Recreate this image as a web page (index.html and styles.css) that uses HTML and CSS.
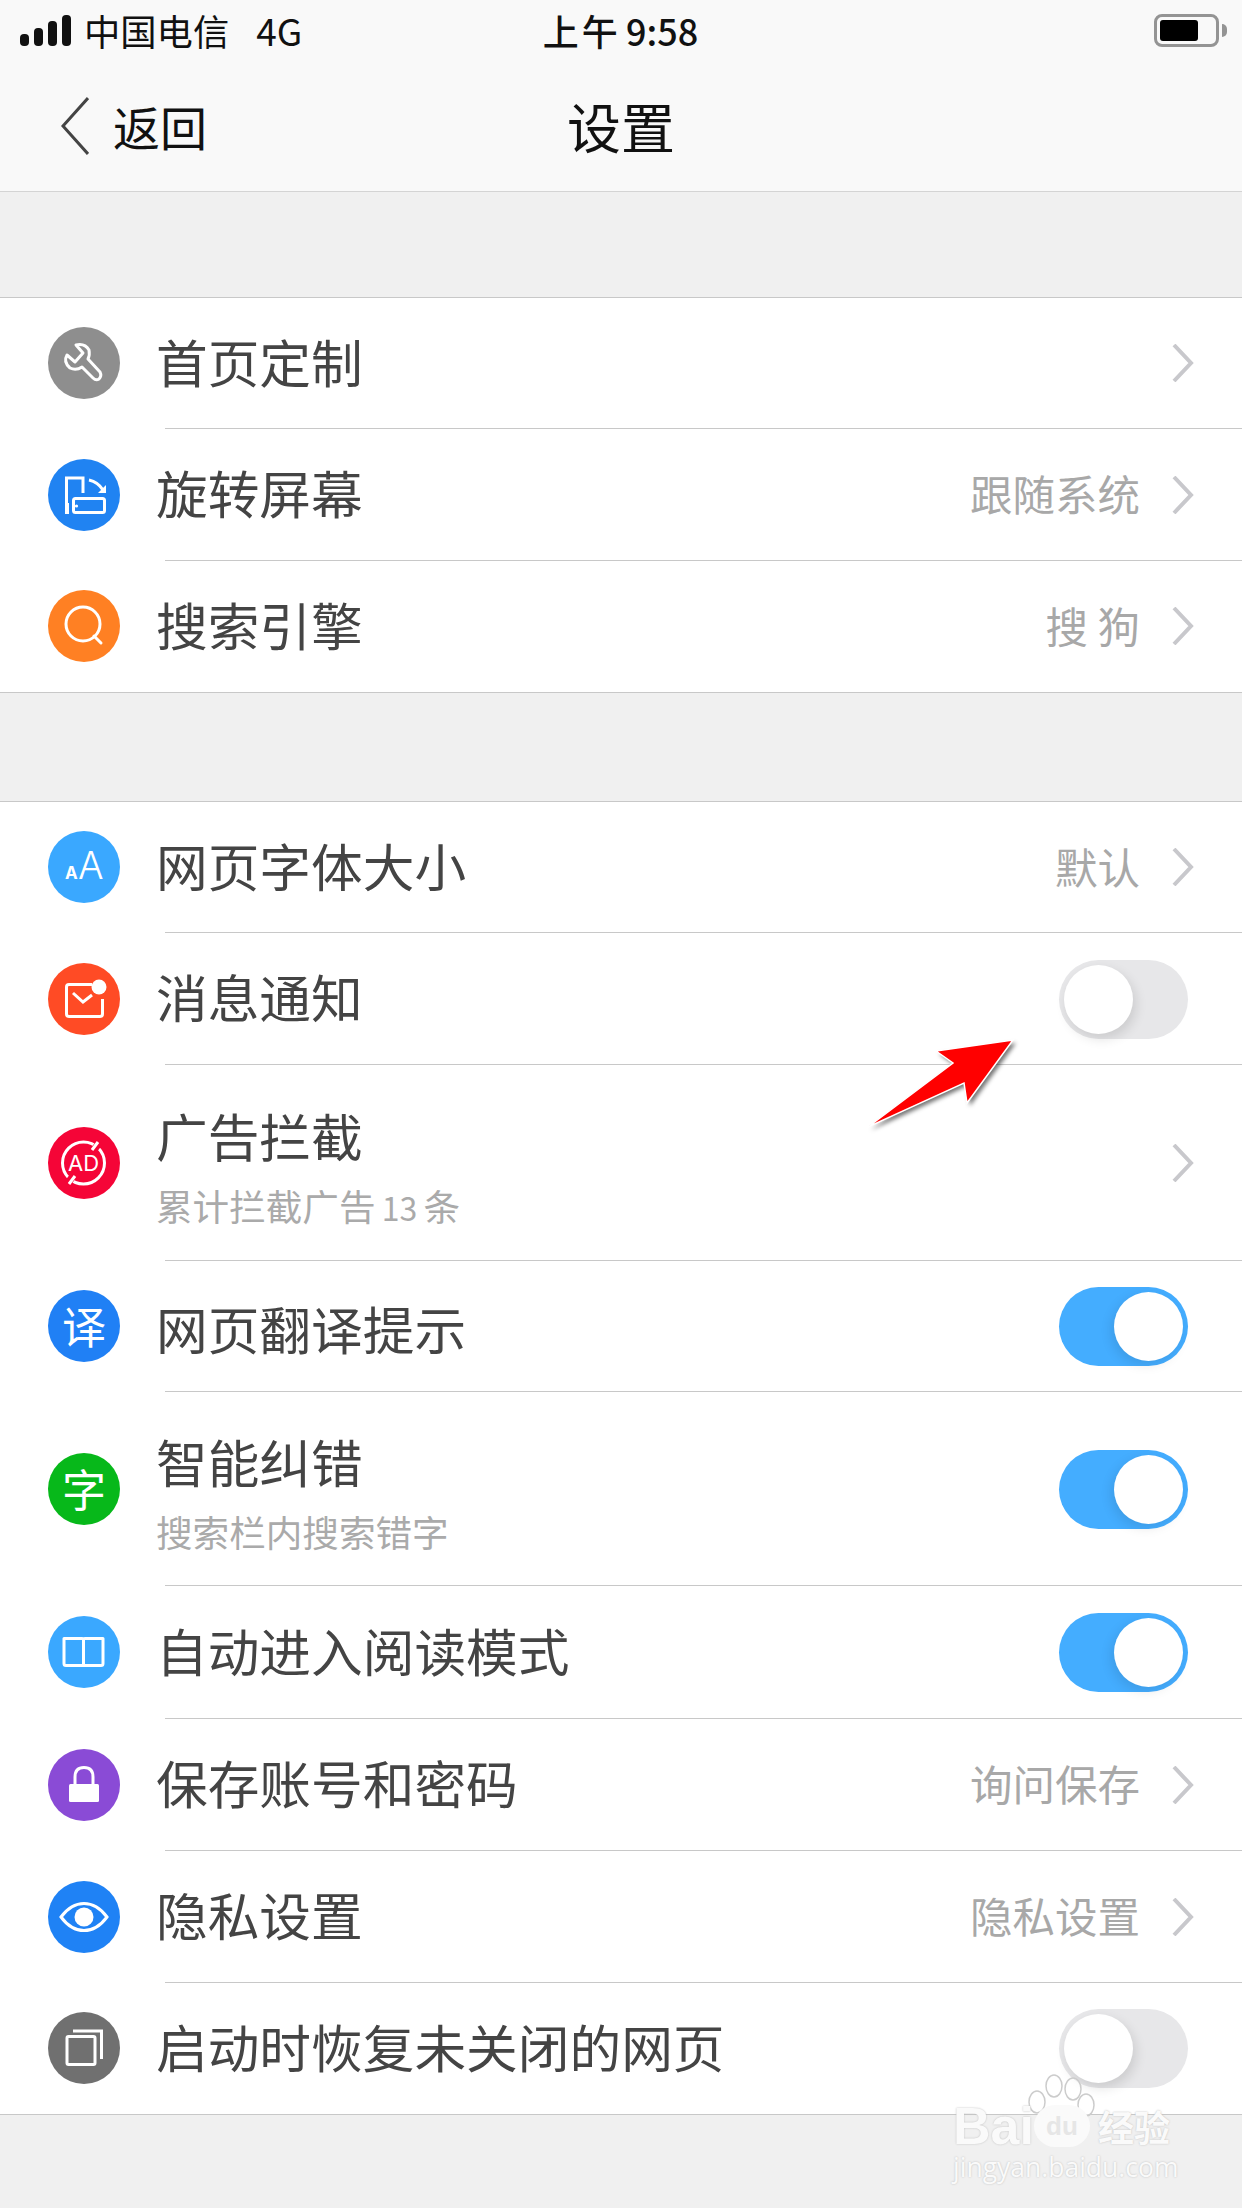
FILE: index.html
```html
<!DOCTYPE html>
<html lang="zh-CN">
<head>
    <meta charset="UTF-8">
    <title>设置</title>
    <link rel="stylesheet" href="styles.css">
</head>
<body>

<!-- Status bar and title -->
<header class="top">
    <div class="status-bar">
        <div class="status-left">
            <div class="signal"><i class="bar1"></i><i class="bar2"></i><i class="bar3"></i><i class="bar4"></i></div>
            <span class="carrier">中国电信</span>
            <span class="network">4G</span>
        </div>
        <span class="clock"><span class="clock-cn">上午</span> 9:58</span>
        <div class="battery"><div class="battery-case"><div class="battery-fill"></div></div><div class="battery-nub"></div></div>
    </div>
    <nav class="nav-bar">
        <div class="back">
            <svg class="back-icon" width="28" height="58" viewBox="0 0 28 58"><path d="M27 1 L2 29 L27 57" fill="none" stroke="#444" stroke-width="3"/></svg>
            <span class="back-label">返回</span>
        </div>
        <span class="nav-title">设置</span>
    </nav>
</header>

<section class="group group-first">
    <div class="row row-short">
        <svg class="icon" viewBox="0 0 72 72"><circle cx="36" cy="36" r="36" fill="#8e8e8e"/><path d="M19 28 L27 35 L35 26 L28 18 Q37 16 41 23 Q42 28 40 32 L52 45 Q54 49 51 52 Q48 54 45 51 L34 40 Q28 44 22 41 Q15 35 19 28 Z" fill="none" stroke="#fff" stroke-width="3" stroke-linejoin="round"/></svg>
        <div class="label">首页定制</div>
        <svg class="chevron" viewBox="0 0 22 38"><path d="M2 1 L19 19 L2 37" fill="none" stroke="#c8c8cc" stroke-width="4"/></svg>
    </div>
    <div class="row">
        <svg class="icon" viewBox="0 0 72 72"><circle cx="36" cy="36" r="36" fill="#2083f2"/><path d="M18.500 55 V19 H35 V34" fill="none" stroke="#fff" stroke-width="3"/><rect x="17" y="44" width="4" height="11" fill="#fff"/><rect x="25.500" y="39.500" width="31" height="14" rx="2" fill="none" stroke="#fff" stroke-width="3"/><circle cx="28.500" cy="47" r="1.600" fill="#fff"/><path d="M41 21 Q50 23 55 31" fill="none" stroke="#fff" stroke-width="3"/><path d="M58 26 V34 H50 Z" fill="#fff"/></svg>
        <div class="label">旋转屏幕</div>
        <div class="value">跟随系统</div>
        <svg class="chevron" viewBox="0 0 22 38"><path d="M2 1 L19 19 L2 37" fill="none" stroke="#c8c8cc" stroke-width="4"/></svg>
    </div>
    <div class="row row-short">
        <svg class="icon" viewBox="0 0 72 72"><circle cx="36" cy="36" r="36" fill="#ff8023"/><circle cx="35" cy="34" r="17" fill="none" stroke="#fff" stroke-width="3"/><path d="M46 46 L53 53" stroke="#fff" stroke-width="3" stroke-linecap="round"/></svg>
        <div class="label">搜索引擎</div>
        <div class="value">搜 狗</div>
        <svg class="chevron" viewBox="0 0 22 38"><path d="M2 1 L19 19 L2 37" fill="none" stroke="#c8c8cc" stroke-width="4"/></svg>
    </div>
</section>

<section class="group">
    <div class="row row-short">
        <svg class="icon" viewBox="0 0 72 72"><circle cx="36" cy="36" r="36" fill="#3aa8ff"/><text class="icon-text" x="17" y="48" font-size="17" font-weight="700" fill="#fff">A</text><text class="icon-text" x="30" y="48" font-size="38" font-weight="300" fill="#fff">A</text></svg>
        <div class="label">网页字体大小</div>
        <div class="value">默认</div>
        <svg class="chevron" viewBox="0 0 22 38"><path d="M2 1 L19 19 L2 37" fill="none" stroke="#c8c8cc" stroke-width="4"/></svg>
    </div>
    <div class="row">
        <svg class="icon" viewBox="0 0 72 72"><circle cx="36" cy="36" r="36" fill="#ff4b25"/><path d="M44 21.500 H21 Q18.500 21.500 18.500 24 V51 Q18.500 53.500 21 53.500 H52 Q54.500 53.500 54.500 51 V36" fill="none" stroke="#fff" stroke-width="3"/><path d="M25 30 L35 39 L44 32" fill="none" stroke="#fff" stroke-width="3"/><circle cx="51" cy="24" r="7.500" fill="#fff"/></svg>
        <div class="label">消息通知</div>
        <div class="toggle"><div class="knob"></div></div>
    </div>
    <div class="row row-tall">
        <svg class="icon" viewBox="0 0 72 72"><circle cx="36" cy="36" r="36" fill="#f50537"/><circle cx="35.500" cy="36" r="21" fill="none" stroke="#fff" stroke-width="3"/><path d="M42 28 L52 15 M19 57 L29 44" stroke="#f50537" stroke-width="7"/><path d="M44 23 L50 15 M21 57 L27 49" stroke="#fff" stroke-width="3"/><text class="icon-text" x="35.500" y="44" font-size="22" text-anchor="middle" fill="#fff">AD</text></svg>
        <div class="label-stack">
            <div class="label">广告拦截</div>
            <div class="sub-label">累计拦截广告 <span class="sub-num">13</span> 条</div>
        </div>
        <svg class="chevron" viewBox="0 0 22 38"><path d="M2 1 L19 19 L2 37" fill="none" stroke="#c8c8cc" stroke-width="4"/></svg>
    </div>
    <div class="row row-short">
        <div class="icon icon-char icon-blue">译</div>
        <div class="label label-low">网页翻译提示</div>
        <div class="toggle toggle-on"><div class="knob"></div></div>
    </div>
    <div class="row row-tall2">
        <div class="icon icon-char icon-green">字</div>
        <div class="label-stack">
            <div class="label">智能纠错</div>
            <div class="sub-label">搜索栏内搜索错字</div>
        </div>
        <div class="toggle toggle-on"><div class="knob"></div></div>
    </div>
    <div class="row row-long">
        <svg class="icon" viewBox="0 0 72 72"><circle cx="36" cy="36" r="36" fill="#3aa8ff"/><path d="M16 22.500 H34 Q35.500 22.500 35.500 24 V49.500 H18 Q16 49.500 16 47.500 Z M55 22.500 H37 Q35.500 22.500 35.500 24 V49.500 H53 Q55 49.500 55 47.500 Z" fill="none" stroke="#fff" stroke-width="3" stroke-linejoin="round"/></svg>
        <div class="label">自动进入阅读模式</div>
        <div class="toggle toggle-on"><div class="knob"></div></div>
    </div>
    <div class="row">
        <svg class="icon" viewBox="0 0 72 72"><circle cx="36" cy="36" r="36" fill="#8a4bd6"/><path d="M27 36 V28 Q27 18.500 36 18.500 Q45 18.500 45 28 V36" fill="none" stroke="#fff" stroke-width="3"/><rect x="21" y="35" width="30" height="18" rx="1.500" fill="#fff"/></svg>
        <div class="label">保存账号和密码</div>
        <div class="value">询问保存</div>
        <svg class="chevron" viewBox="0 0 22 38"><path d="M2 1 L19 19 L2 37" fill="none" stroke="#c8c8cc" stroke-width="4"/></svg>
    </div>
    <div class="row">
        <svg class="icon" viewBox="0 0 72 72"><circle cx="36" cy="36" r="36" fill="#1f82f5"/><path d="M13 36 Q23 22.500 36 22.500 Q49 22.500 59 36 Q49 49.500 36 49.500 Q23 49.500 13 36 Z" fill="none" stroke="#fff" stroke-width="3"/><circle cx="36" cy="36" r="9.500" fill="#fff"/></svg>
        <div class="label">隐私设置</div>
        <div class="value">隐私设置</div>
        <svg class="chevron" viewBox="0 0 22 38"><path d="M2 1 L19 19 L2 37" fill="none" stroke="#c8c8cc" stroke-width="4"/></svg>
    </div>
    <div class="row row-last">
        <svg class="icon" viewBox="0 0 72 72"><circle cx="36" cy="36" r="36" fill="#707070"/><rect x="19" y="24.500" width="28" height="28" rx="1.500" fill="none" stroke="#fff" stroke-width="3"/><path d="M25 19 H53.500 V47" fill="none" stroke="#fff" stroke-width="3"/></svg>
        <div class="label">启动时恢复未关闭的网页</div>
        <div class="toggle"><div class="knob"></div></div>
    </div>
</section>

<!-- Red arrow drawn over the screenshot -->
<svg class="arrow" width="1242" height="2208" viewBox="0 0 1242 2208">
    <path class="arrow-shadow" d="M868 1127 L953 1063 L936 1051 L1013 1040 L967 1103 L964 1083 Z"/>
    <path class="arrow-head" d="M868 1127 L953 1063 L936 1051 L1013 1040 L967 1103 L964 1083 Z"/>
</svg>

<!-- Watermark -->
<div class="watermark">
    <svg class="paw" width="150" height="60" viewBox="0 0 150 60">
        <ellipse cx="101" cy="14" rx="8" ry="11"/>
        <ellipse cx="120" cy="17" rx="8" ry="11"/>
        <ellipse cx="84" cy="30" rx="8" ry="11"/>
        <ellipse cx="133" cy="33" rx="8" ry="11"/>
    </svg>
    <div class="mark-line">
        <span class="mark-bai">Bai</span>
        <span class="mark-du">du</span>
        <span class="mark-cn">经验</span>
    </div>
    <div class="mark-url">jingyan.baidu.com</div>
</div>

</body>
</html>
```
FILE: styles.css
```css
html, body {
    margin: 0;
    padding: 0;
}
body {
    width: 1242px;
    height: 2208px;
    overflow: hidden;
    position: relative;
    background-color: #f0f0f0;
    font-family: "Noto Sans CJK SC", "Liberation Sans", sans-serif;
    color: #444;
}
.top {
    height: 191px;
    background-color: #f9f9f9;
    border-bottom: 1px solid #d4d4d4;
    color: #111;
}
.status-bar {
    height: 60px;
    display: grid;
    grid-template-columns: 1fr auto 1fr;
    align-items: center;
    padding: 0 15px 0 20px;
}
.status-left {
    display: flex;
    align-items: center;
}
.signal {
    display: flex;
    align-items: flex-end;
    gap: 5px;
    height: 31px;
    margin-right: 13px;
}
.signal i {
    display: block;
    width: 9px;
    background-color: #111;
    border-radius: 4px;
}
.bar1 { height: 12px; }
.bar2 { height: 18px; }
.bar3 { height: 25px; }
.bar4 { height: 31px; }
.carrier {
    font-size: 36.3px;
    line-height: 44px;
}
.network {
    font-size: 37px;
    line-height: 44px;
    margin-left: 27px;
}
.clock {
    font-size: 36px;
    line-height: 44px;
    font-weight: 500;
    word-spacing: -3px;
    margin-left: -6px;
}
.clock-cn {
    letter-spacing: 3px;
}
.battery {
    display: flex;
    align-items: center;
    justify-content: flex-end;
}
.battery-case {
    box-sizing: border-box;
    width: 65px;
    height: 33px;
    border: 3px solid #949494;
    border-radius: 8px;
    padding: 3px;
}
.battery-fill {
    width: 38px;
    height: 100%;
    background-color: #000;
    border-radius: 3px;
}
.battery-nub {
    width: 5px;
    height: 13px;
    margin-left: 3px;
    background-color: #949494;
    border-radius: 0 5px 5px 0;
}
.nav-bar {
    height: 131px;
    display: grid;
    grid-template-columns: 1fr auto 1fr;
    align-items: center;
    padding: 0 0 0 61px;
}
.back {
    display: flex;
    align-items: center;
}
.back-label {
    font-size: 47px;
    line-height: 60px;
    margin-left: 24px;
}
.nav-title {
    font-size: 54px;
    line-height: 60px;
    margin-left: -61px;
}
.group {
    margin-top: 105px;
    background-color: #fff;
    border-top: 1px solid #c8c8c8;
    border-bottom: 1px solid #c8c8c8;
}
.group-first + .group {
    margin-top: 108px;
}
.row {
    box-sizing: border-box;
    height: 132px;
    position: relative;
    display: flex;
    align-items: center;
    padding: 0 48px 1px;
}
.row::after {
    content: "";
    position: absolute;
    left: 165px;
    right: 0;
    bottom: 0;
    height: 1px;
    background-color: #c8c8c8;
}
.group .row:last-child::after {
    display: none;
}
.row-short { height: 131px; }
.row-tall { height: 196px; }
.row-tall2 { height: 194px; }
.row-long { height: 133px; }
.row-last { height: 131px; }
.icon {
    flex: none;
    width: 72px;
    height: 72px;
    margin-right: 36px;
}
.icon-text {
    font-family: "Inter", "Liberation Sans", sans-serif;
}
.icon-char {
    border-radius: 50%;
    color: #fff;
    font-size: 44px;
    line-height: 70px;
    text-align: center;
}
.icon-blue { background-color: #2080f5; }
.icon-green { background-color: #07b81a; }
.label {
    font-size: 51.7px;
    line-height: 60px;
    flex: 1;
    white-space: nowrap;
    padding-bottom: 5px;
}
.label-low {
    padding-top: 3px;
    padding-bottom: 0;
}
.label-stack {
    flex: 1;
    align-self: flex-start;
    padding-top: 40px;
}
.label-stack .label {
    padding-bottom: 0;
}
.sub-label {
    font-size: 36.6px;
    line-height: 40px;
    margin-top: 21px;
    color: #aaa;
    word-spacing: -2px;
}
.sub-num {
    font-size: 32px;
}
.row-tall2 .label-stack {
    padding-top: 39px;
}
.value {
    font-size: 42.5px;
    color: #a8a8a8;
    margin-right: 32px;
    padding-bottom: 4px;
}
.chevron {
    flex: none;
    width: 22px;
    height: 38px;
}
.toggle {
    box-sizing: border-box;
    flex: none;
    width: 129px;
    height: 79px;
    margin: 1px 6px 0 0;
    padding: 5px;
    border-radius: 40px;
    background-color: #e7e7e9;
}
.knob {
    width: 69px;
    height: 69px;
    border-radius: 50%;
    background-color: #fff;
    box-shadow: 3px 5px 12px rgba(0, 0, 0, 0.12);
}
.toggle-on {
    background-color: #44adff;
    padding-left: 55px;
}
.toggle-on .knob {
    box-shadow: -3px 4px 12px rgba(0, 0, 0, 0.1);
}
.arrow {
    position: absolute;
    left: 0;
    top: 0;
    pointer-events: none;
}
.arrow-shadow {
    fill: rgba(0, 0, 0, 0.55);
    transform: translate(3px, 3px);
    filter: blur(2px);
}
.arrow-head {
    fill: #ff0000;
    stroke: #fff;
    stroke-width: 1.5;
    stroke-miterlimit: 20;
}
.watermark {
    position: absolute;
    left: 953px;
    top: 2072px;
    width: 226px;
    height: 112px;
    color: #fafafa;
    text-shadow: 0 0 2px #bbb;
}
.paw {
    position: absolute;
    left: 0;
    top: 0;
}
.paw ellipse {
    fill: rgba(255, 255, 255, 0.5);
    stroke: #ccc;
    stroke-width: 1.5;
}
.mark-line {
    position: absolute;
    left: 0;
    top: 30px;
    display: flex;
    align-items: center;
    height: 48px;
}
.mark-bai {
    font-family: "Liberation Sans", sans-serif;
    font-weight: 700;
    font-size: 52px;
    line-height: 48px;
    width: 81px;
}
.mark-du {
    font-family: "Liberation Sans", sans-serif;
    font-weight: 700;
    font-size: 26px;
    line-height: 42px;
    width: 56px;
    height: 42px;
    text-align: center;
    color: #e6e6e6;
    background-color: #fafafa;
    border-radius: 22px;
    text-shadow: none;
}
.mark-cn {
    font-size: 36px;
    line-height: 48px;
    font-weight: 700;
    margin-left: 8px;
}
.mark-url {
    position: absolute;
    left: 0;
    top: 80px;
    font-family: "Open Sans", "Liberation Sans", sans-serif;
    font-size: 26.5px;
    line-height: 30px;
    white-space: nowrap;
}
```
